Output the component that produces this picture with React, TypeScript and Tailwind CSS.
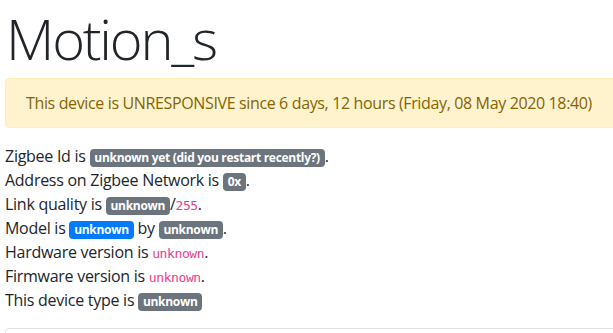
function Badge({ children, primary }: { children: React.ReactNode; primary?: boolean }) {
  return (
    <span
      className={
        "inline-block rounded-[4px] px-[4.8px] pt-[3px] pb-[3px] text-[12px] font-bold leading-[12px] text-white align-baseline whitespace-nowrap tracking-[-0.3px] " +
        (primary ? "bg-[#007bff]" : "bg-[#6c757d]")
      }
    >
      {children}
    </span>
  );
}

function Code({ children }: { children: React.ReactNode }) {
  return (
    <code className="text-[#e83e8c] text-[13px] leading-none tracking-[-0.4px]" style={{ fontFamily: "'DejaVu Sans Mono', monospace" }}>
      {children}
    </code>
  );
}

export default function App() {
  return (
    <div
      className="w-[613px] h-[333px] overflow-hidden bg-white text-[#212529]"
      style={{ fontFamily: "'Open Sans', 'Noto Sans', sans-serif" }}
    >
      <div className="w-[660px] pl-[5px]">
        <h1 className="pt-[5px] mb-[6px] text-[56px] font-light leading-[67px] tracking-[-2.2px] pl-[1px]">Motion_s</h1>
        <div className="mb-[16px] rounded-[4px] border border-[#ffeeba] bg-[#fff3cd] px-[20px] py-[12px] text-[16px] leading-[24px] text-[#856404] tracking-[-0.36px]">
          This device is UNRESPONSIVE since 6 days, 12 hours (Friday, 08 May 2020 18:40)
        </div>
        <p className="mb-[16px] text-[16px] leading-[24px] tracking-[-0.27px]">
          Zigbee Id is <Badge>unknown yet (did you restart recently?)</Badge>.
          <br />
          Address on Zigbee Network is <Badge>0x</Badge>.
          <br />
          Link quality is <Badge>unknown</Badge>/<Code>255</Code>.
          <br />
          Model is <Badge primary>unknown</Badge> by <Badge>unknown</Badge>.
          <br />
          Hardware version is <Code>unknown</Code>.
          <br />
          Firmware version is <Code>unknown</Code>.
          <br />
          This device type is <Badge>unknown</Badge>
        </p>
        <div className="h-[60px] rounded-[4px] border border-[rgba(0,0,0,0.125)]" />
      </div>
    </div>
  );
}
